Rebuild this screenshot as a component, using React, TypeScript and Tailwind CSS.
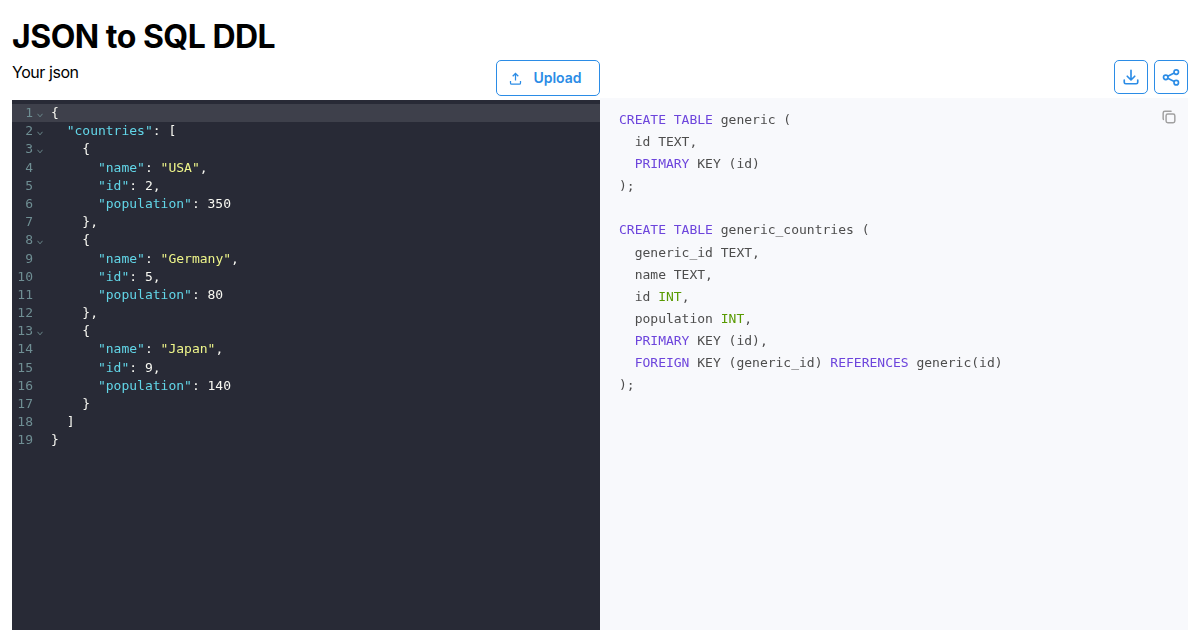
import React from "react";

const mono = "font-['DejaVu_Sans_Mono',monospace]";

const K = ({ c }: { c: string }) => <span className="text-[#62d6e8]">{c}</span>;
const S = ({ c }: { c: string }) => <span className="text-[#eef58a]">{c}</span>;

const json: [React.ReactNode, boolean][] = [
  [<>{"{"}</>, true],
  [<>{"  "}<K c={'"countries"'} />{": ["}</>, true],
  [<>{"    {"}</>, true],
  [<>{"      "}<K c={'"name"'} />{": "}<S c={'"USA"'} />{","}</>, false],
  [<>{"      "}<K c={'"id"'} />{": 2,"}</>, false],
  [<>{"      "}<K c={'"population"'} />{": 350"}</>, false],
  [<>{"    },"}</>, false],
  [<>{"    {"}</>, true],
  [<>{"      "}<K c={'"name"'} />{": "}<S c={'"Germany"'} />{","}</>, false],
  [<>{"      "}<K c={'"id"'} />{": 5,"}</>, false],
  [<>{"      "}<K c={'"population"'} />{": 80"}</>, false],
  [<>{"    },"}</>, false],
  [<>{"    {"}</>, true],
  [<>{"      "}<K c={'"name"'} />{": "}<S c={'"Japan"'} />{","}</>, false],
  [<>{"      "}<K c={'"id"'} />{": 9,"}</>, false],
  [<>{"      "}<K c={'"population"'} />{": 140"}</>, false],
  [<>{"    }"}</>, false],
  [<>{"  ]"}</>, false],
  [<>{"}"}</>, false],
];

const W = ({ c }: { c: string }) => <span className="text-[#6d45dc]">{c}</span>;
const G = ({ c }: { c: string }) => <span className="text-[#589a00]">{c}</span>;

const sql: React.ReactNode[] = [
  <><W c="CREATE TABLE" /> generic (</>,
  <>{"  id TEXT,"}</>,
  <>{"  "}<W c="PRIMARY" /> KEY (id)</>,
  <>);</>,
  <>{" "}</>,
  <><W c="CREATE TABLE" /> generic_countries (</>,
  <>{"  generic_id TEXT,"}</>,
  <>{"  name TEXT,"}</>,
  <>{"  id "}<G c="INT" />,</>,
  <>{"  population "}<G c="INT" />,</>,
  <>{"  "}<W c="PRIMARY" /> KEY (id),</>,
  <>{"  "}<W c="FOREIGN" /> KEY (generic_id) <W c="REFERENCES" /> generic(id)</>,
  <>);</>,
];

function Chevron() {
  return (
    <svg width="6" height="5" viewBox="0 0 6 5" fill="none" className="stroke-[#6f8e93] mt-[5px] mr-[4px]">
      <path d="M0.5 0.8 L3 3.8 L5.5 0.8" strokeWidth="0.9" />
    </svg>
  );
}

export default function App() {
  return (
    <div className="w-[1200px] h-[630px] overflow-hidden bg-white px-3 pt-[14px] font-['Inter',sans-serif] text-black">
      <h1 className="text-[32px] leading-[46px] font-bold h-[46px] tracking-[-0.5px]">JSON to SQL DDL</h1>
      <div className="flex h-[570px]">
        <div className="w-[588px] flex flex-col">
          <div className="flex justify-between h-[40px]">
            <span className="text-base leading-6 tracking-[-0.45px]">Your json</span>
            <button className="w-[104px] h-9 border border-[#2b8ce6] rounded-[5px] flex items-center justify-center gap-[10px] pr-[6px] text-[#2b8ce6] text-sm font-semibold">
              <svg width="15" height="15" viewBox="0 0 24 24" fill="none" stroke="currentColor" strokeWidth="2"><path d="M4 16v3a2 2 0 0 0 2 2h12a2 2 0 0 0 2-2v-3" /><path d="M12 15V4M7.5 8.5 12 4l4.5 4.5" /></svg>
              Upload
            </button>
          </div>
          <div className="flex-1 bg-[#282a36] pt-1">
            <div className={`will-change-transform text-[13px] leading-[18.2px] ${mono} whitespace-pre text-[#f8f8f2]`}>
              {json.map(([c, f], i) => (
                <div key={i} className={`flex h-[18.2px] ${i === 0 ? "bg-[#3e404b]" : ""}`}>
                  <span className="w-[21px] text-right text-[#6f8e93]">{i + 1}</span>
                  <span className="w-[18px] flex items-center justify-center">{f ? <Chevron /> : null}</span>
                  <span>{c}</span>
                </div>
              ))}
            </div>
          </div>
        </div>
        <div className="w-[588px] flex flex-col">
          <div className="flex justify-end gap-[6px] h-[38px]">
            <button className="w-[34px] h-[34px] border border-[#2b8ce6] rounded-[5px] flex items-center justify-center text-[#2b8ce6]">
              <svg width="18" height="18" viewBox="0 0 24 24" fill="none" stroke="currentColor" strokeWidth="2.2" strokeLinecap="round" strokeLinejoin="round"><path d="M3 16v3a2 2 0 0 0 2 2h14a2 2 0 0 0 2-2v-3" /><path d="M12 3v13M7 11l5 5 5-5" /></svg>
            </button>
            <button className="w-[34px] h-[34px] border border-[#2b8ce6] rounded-[5px] flex items-center justify-center text-[#2b8ce6]">
              <svg width="18" height="18" viewBox="0 0 24 24" fill="none" stroke="currentColor" strokeWidth="2.2"><circle cx="19" cy="5.4" r="3" /><circle cx="5" cy="12.4" r="3" /><circle cx="19" cy="19.5" r="3" /><path d="M7.7 11 16.3 6.8M7.7 13.8l8.6 4.3" /></svg>
            </button>
          </div>
          <div className="relative flex-1 bg-[#f8f9fc] pl-[19px] pt-[11px]">
            <svg className="absolute right-[12px] top-[12px] text-[#a0a0a0]" width="14" height="14" viewBox="0 0 24 24" fill="none" stroke="currentColor" strokeWidth="2.5"><rect x="7" y="7" width="15" height="15" rx="3" /><path d="M3.5 16.5A2 2 0 0 1 2 15V5a3 3 0 0 1 3-3h10a2 2 0 0 1 1.5.7" /></svg>
            <div className={`will-change-transform text-[13px] leading-[22.1px] ${mono} whitespace-pre text-[#4d4d4d]`}>
              {sql.map((l, i) => <div key={i} className="h-[22.1px]">{l}</div>)}
            </div>
          </div>
        </div>
      </div>
    </div>
  );
}
